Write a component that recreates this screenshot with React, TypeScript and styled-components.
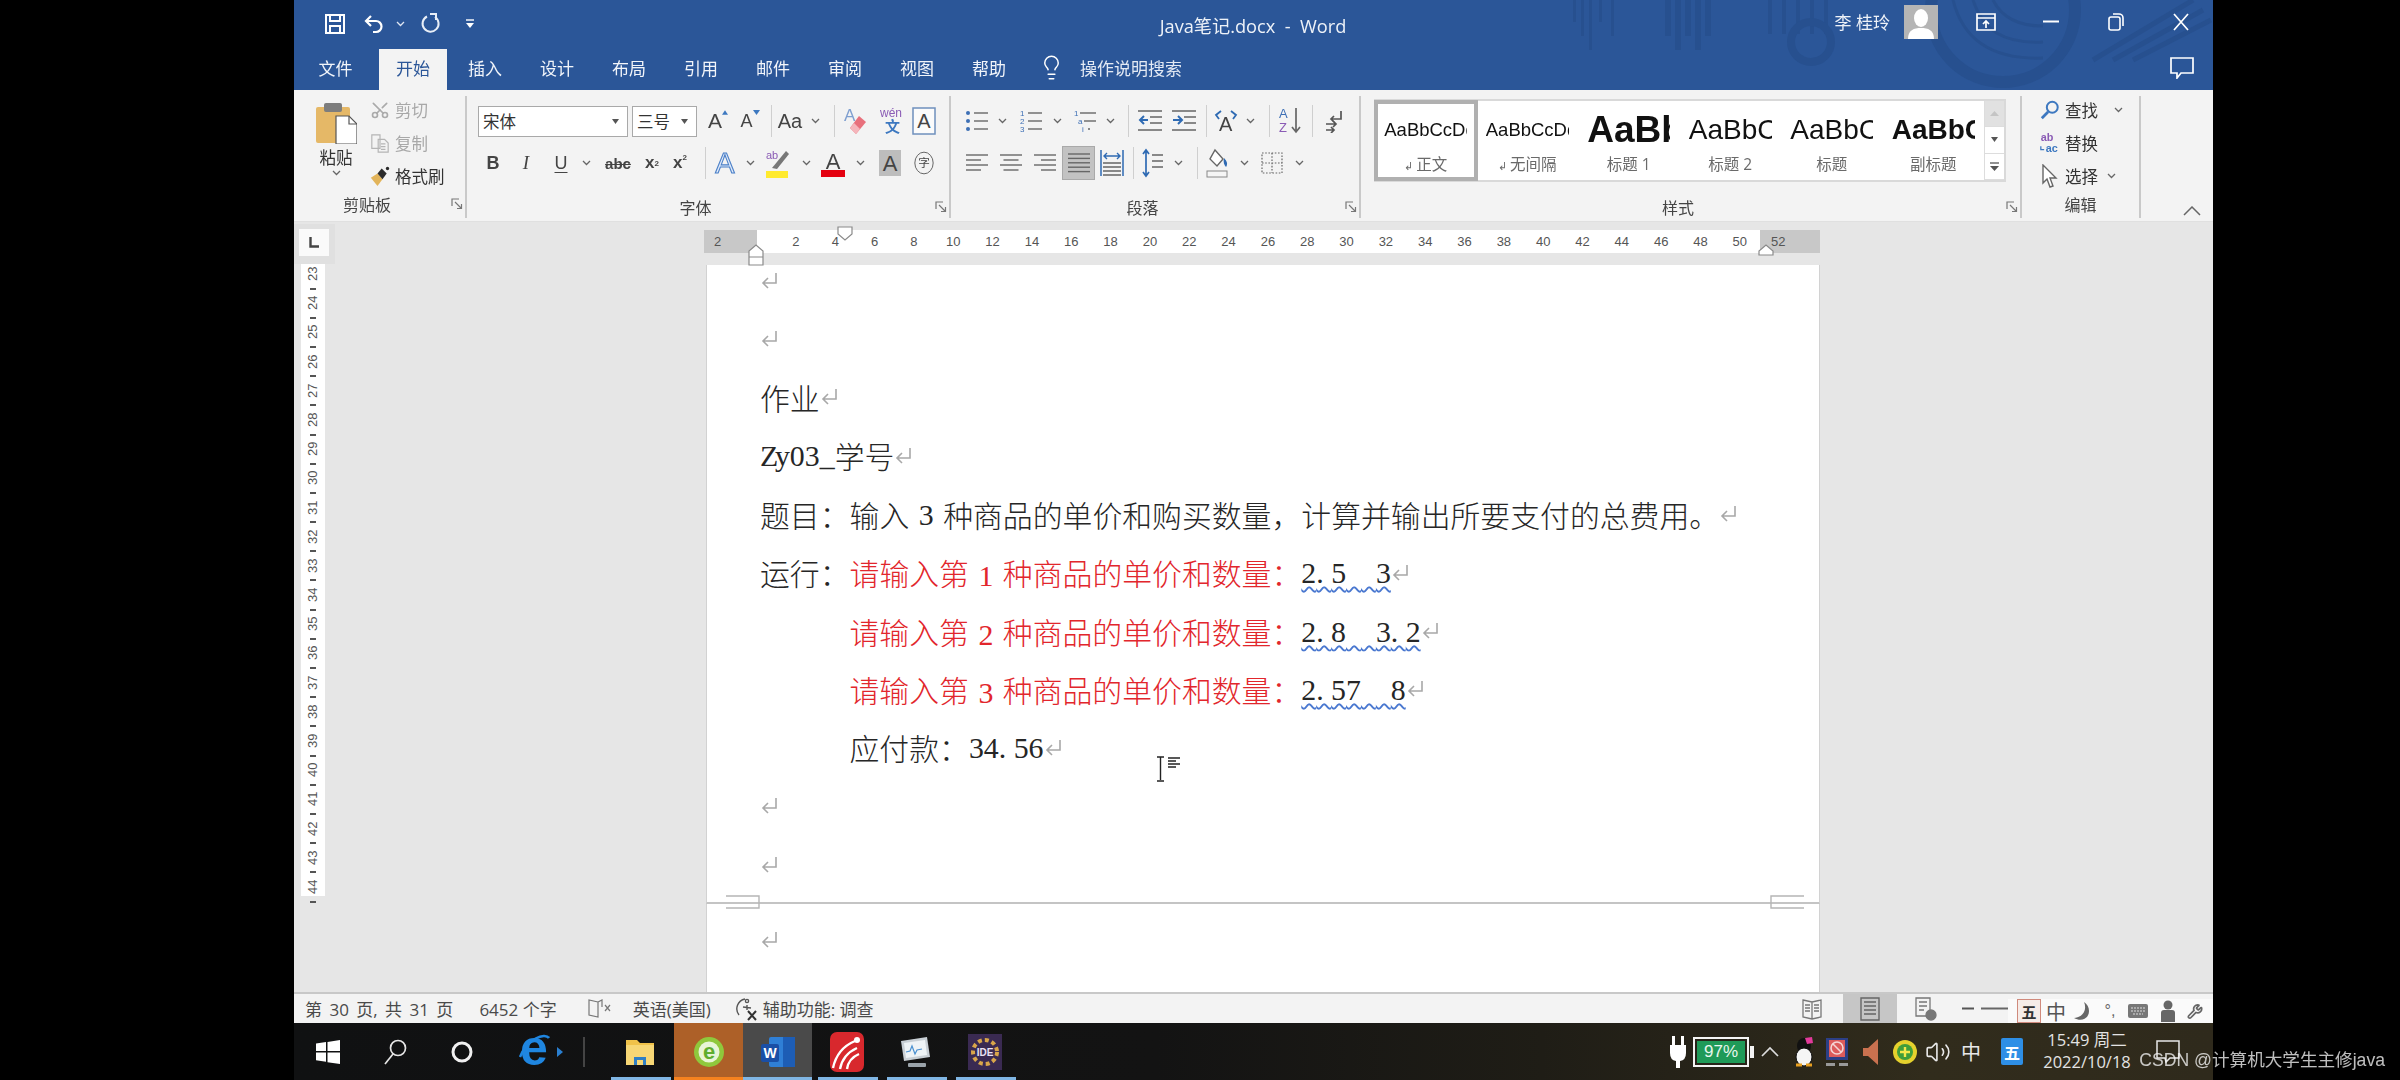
import React from "react";
import styled, { createGlobalStyle } from "styled-components";
import { Scissors, Lightbulb, Volume2, Wrench } from "lucide-react";

const UI = `"Open Sans","Noto Sans CJK SC",sans-serif`;

const Global = createGlobalStyle`
  html, body { margin: 0; padding: 0; background: #000; }
  * { box-sizing: border-box; }
  body { font-family: ${UI}; }
`;

const Screen = styled.div`
  position: relative; width: 2400px; height: 1080px; background: #000; overflow: hidden;
  display: flex; padding-left: 294px;
`;
const Win = styled.div`
  width: 1919px; height: 1080px; display: flex; flex-direction: column; filter: blur(0.45px);
`;
const Top = styled.div`
  position: relative; height: 90px; background: #2b5698; color: #fff; flex: none;
`;
const Pattern = styled.svg`
  position: absolute; right: 0; top: 0; width: 660px; height: 90px;
`;
const TitleRow = styled.div`
  position: relative; height: 49px; display: flex; align-items: center;
`;
const Qat = styled.div`
  display: flex; align-items: center; padding: 0 0 2px 30px; width: 860px;
`;
const Cell = styled.div<{ $w: number; $c?: string; $fs?: number; $b?: boolean; $i?: boolean; $serif?: boolean; $pl?: number }>`
  width: ${p => p.$w}px; flex: none; display: flex; align-items: center; justify-content: center;
  padding-left: ${p => p.$pl || 0}px;
  color: ${p => p.$c || "#444"}; font-size: ${p => p.$fs || 16}px;
  font-family: ${p => (p.$serif ? `"Liberation Serif",serif` : `"Liberation Sans","Noto Sans CJK SC",sans-serif`)};
  font-weight: ${p => (p.$b ? 700 : 400)}; font-style: ${p => (p.$i ? "italic" : "normal")};
  height: 32px; position: relative;
`;
const Title = styled.div`
  width: 198px; font-size: 18.2px; white-space: pre; color: #eef2f8; text-align: center;
`;
const User = styled.div`
  margin-left: auto; display: flex; align-items: center; color: #eef2f8; font-size: 17px; padding-bottom: 6px;
`;
const UserName = styled.span`
  margin-right: 14px; white-space: pre;
`;
const Avatar = styled.div`
  width: 34px; height: 34px; background: #b5b5b5; margin-right: 32px; display: flex; align-items: flex-end; justify-content: center;
`;
const TabRow = styled.div`
  position: relative; height: 41px; display: flex; align-items: stretch;
`;
const Tab = styled.div<{ $active?: boolean; $first?: boolean }>`
  width: ${p => (p.$first ? 83 : 68)}px; margin: 0 ${p => (p.$first ? 0 : 2)}px; flex: none; display: flex; align-items: center; justify-content: center;
  font-size: 17px; padding-bottom: 5px; color: ${p => (p.$active ? "#2b5698" : "#f2f5fa")};
  background: ${p => (p.$active ? "#f3f3f3" : "transparent")};
`;
const TellMe = styled.div`
  display: flex; align-items: center; gap: 15px; margin-left: 13px; padding-bottom: 5px; color: #e4eaf4; font-size: 17px; white-space: nowrap;
`;
const CommentBtn = styled.div`
  margin-left: auto; width: 43px; display: flex; align-items: center; justify-content: flex-start; padding-bottom: 4px;
`;
const Ribbon = styled.div`
  height: 132px; flex: none; background: #f3f3f3; border-bottom: 1px solid #e0e0e0; display: flex; align-items: flex-start; padding-top: 6px; position: relative;
`;
const Group = styled.div<{ $w: number }>`
  width: ${p => p.$w}px; height: 122px; flex: none; border-right: 2px solid #c9c9c9; display: flex; flex-direction: column; position: relative;
`;
const Body = styled.div`
  flex: 1; min-height: 0; display: flex; flex-direction: column; gap: 10px; padding: 9px 0 0 0;
`;
const Row = styled.div<{ $pl?: number }>`
  display: flex; align-items: center; height: 32px; padding-left: ${p => p.$pl || 0}px;
`;
const GLabel = styled.div`
  height: 22px; flex: none; display: flex; align-items: center; font-size: 16px; color: #444;
`;
const GLabelText = styled.div`
  flex: 1; text-align: center;
`;
const Launcher = styled.div`
  width: 25px; display: flex; justify-content: flex-end; padding-right: 2px;
`;
const Combo = styled.div<{ $w: number }>`
  width: ${p => p.$w}px; height: 31px; background: #fff; border: 1.5px solid #a9a9a9; display: flex; align-items: center; justify-content: space-between;
  padding: 0 7px 0 4px; font-size: 16.5px; color: #333; flex: none; margin-right: 4px;
`;
const VSep = styled.div<{ $ml?: number }>`
  width: 1px; height: 32px; background: #cfcfcf; margin-left: ${p => p.$ml || 0}px; flex: none;
`;
const Clip = styled.div`
  display: flex; height: 100px; margin-top: -3px;
`;
const PasteCol = styled.div`
  width: 68px; margin-left: 8px; display: flex; flex-direction: column; align-items: center; flex: none; padding-top: 9px; color: #333; font-size: 16.5px;
`;
const PasteText = styled.span`
  margin-top: 2px; line-height: 24px;
`;
const SmallCol = styled.div`
  display: flex; flex-direction: column; flex: none;
`;
const SmallRow = styled.div<{ $dim?: boolean }>`
  height: 33px; display: flex; align-items: center; gap: 5px; font-size: 16.5px; color: ${p => (p.$dim ? "#a8a8a8" : "#333")};
`;
const IconBox = styled.div`
  width: 20px; display: flex; justify-content: center; align-items: center; flex: none;
`;
const Gallery = styled.div`
  margin: 3px 0 0 13px; width: 632px; height: 83px; background: #fff; border: 2px solid #d9d9d9; border-left-width: 1px; display: flex; flex: none;
`;
const Styles = styled.div`
  flex: 1; display: flex; min-width: 0;
`;
const StyleItem = styled.div<{ $sel?: boolean }>`
  width: 101.5px; flex: none; display: flex; flex-direction: column; align-items: center; overflow: hidden;
  outline: ${p => (p.$sel ? "4px solid #b0b0b0" : "none")}; outline-offset: -3px;
`;
const Sample = styled.div<{ $fs: number; $b?: boolean }>`
  width: 83px; height: 51px; overflow: hidden; white-space: nowrap; display: flex; align-items: center;
  font-family: "Liberation Sans",sans-serif; font-size: ${p => p.$fs}px; font-weight: ${p => (p.$b ? 700 : 400)}; color: #111; padding-top: 6px;
`;
const StyleName = styled.div`
  font-size: 15.5px; color: #6a6a6a; line-height: 24px; white-space: pre;
`;
const StyleMark = styled.span`
  font-size: 11px; margin-right: 3px;
`;
const ScrollCol = styled.div`
  width: 20px; flex: none; display: flex; flex-direction: column; border-left: 1px solid #ddd;
`;
const ScrollBtn = styled.div<{ $gray?: boolean }>`
  flex: 1; display: flex; align-items: center; justify-content: center; background: ${p => (p.$gray ? "#e1e1e1" : "#fff")}; border-bottom: 1px solid #ddd;
`;
const EditCol = styled.div`
  display: flex; flex-direction: column; padding: 0 0 0 18px; height: 100px; margin-top: -3px;
`;
const Collapse = styled.div`
  flex: 1; height: 126px; display: flex; align-items: flex-end; justify-content: flex-end; padding: 0 12px 6px 0;
`;
const Doc = styled.div`
  flex: 1; min-height: 0; background: #e6e6e6; display: flex; align-items: flex-start; overflow: hidden;
`;
const LeftCol = styled.div`
  width: 410px; flex: none; display: flex; flex-direction: column;
`;
const CornerBand = styled.div`
  width: 41px; height: 40px; background: #e0e0e0; padding: 5px 0 0 5px; margin-top: 2px;
`;
const Corner = styled.div`
  width: 30px; height: 27px; background: #fafafa; display: flex; align-items: center; justify-content: center;
`;
const VRuler = styled.div`
  width: 24px; margin: 0 0 0 7px; height: 632px; background: #fff; display: flex; flex-direction: column; align-items: center; flex: none;
`;
const VNum = styled.div`
  height: 20px; font-size: 13px; color: #555; font-family: "Liberation Sans",sans-serif; writing-mode: vertical-rl; transform: rotate(180deg); line-height: 24px; text-align: center; flex: none;
`;
const VTick = styled.div`
  height: 9.2px; display: flex; align-items: center; flex: none;
`;
const VDash = styled.div`
  width: 6px; height: 2px; background: #555;
`;
const PageCol = styled.div`
  width: 1116px; flex: none; display: flex; flex-direction: column; position: relative;
`;
const RulerBand = styled.div`
  height: 43px; padding-top: 8px; position: relative; flex: none;
`;
const HRuler = styled.div`
  height: 23px; display: flex; font-family: "Liberation Sans",sans-serif; font-size: 13px; color: #555;
`;
const RulerGray = styled.div<{ $w: number; $pl: number }>`
  width: ${p => p.$w}px; background: #c8c8c8; padding-left: ${p => p.$pl}px; line-height: 23px; flex: none;
`;
const RulerWhite = styled.div`
  width: 1003px; flex: none; background: #fff; padding-left: 19.3px; display: flex;
`;
const RulerNum = styled.div`
  width: 39.33px; text-align: center; line-height: 23px; flex: none;
`;
const Marker = styled.svg<{ $l: number; $t: number }>`
  position: absolute; left: ${p => p.$l}px; top: ${p => p.$t}px;
`;
const Sheet = styled.div<{ $h: number; $rule?: boolean; $pt?: number }>`
  margin-left: 2px; width: 1114px; height: ${p => p.$h}px; background: #fff; padding: ${p => p.$pt || 0}px 0 0 53px; overflow: hidden; flex: none;
  border-left: 1px solid #d2d2d2; border-right: 1px solid #d2d2d2;
  border-bottom: ${p => (p.$rule ? "2px solid #c4c4c4" : "none")};
`;
const Lines = styled.div<{ $mt: number }>`
  margin-top: ${p => p.$mt}px; display: flex; flex-direction: column;
`;
const Line = styled.div<{ $indent?: boolean }>`
  height: 58.4px; display: flex; align-items: center; flex: none; white-space: pre;
  padding-left: ${p => (p.$indent ? 89.5 : 0)}px;
  font-family: "Noto Sans CJK SC",sans-serif; font-weight: 300; font-size: 29.85px; color: #262626;
`;
const Red = styled.span`
  color: #e2262c;
`;
const Lat = styled.span<{ $wavy?: boolean; $gap?: boolean }>`
  font-family: "Liberation Serif",serif; font-size: 29.85px; font-weight: 400; white-space: pre;
  margin: 0 ${p => (p.$gap ? 9.5 : 0)}px; position: relative; top: 1px;
  text-decoration: ${p => (p.$wavy ? "underline wavy #4a78d0 1.5px" : "none")}; text-underline-offset: 3px;
`;
const Dot = styled.span`
  letter-spacing: 7.46px;
`;
const WideZ = styled.span`
  letter-spacing: -3.3px;
`;
const Ret = styled.svg`
  flex: none; margin-left: 1px;
`;
const CropMark = styled.svg<{ $l: number; $t: number }>`
  position: absolute; left: ${p => p.$l}px; top: ${p => p.$t}px;
`;
const Status = styled.div`
  height: 31px; flex: none; background: #f3f3f3; border-top: 2px solid #c8c8c8; display: flex; align-items: center; padding-left: 11px; font-size: 17px; color: #4a4a4a; white-space: nowrap;
`;
const StatusItem = styled.div<{ $ml?: number; $ws?: number }>`
  margin-left: ${p => p.$ml || 0}px; display: flex; align-items: center; flex: none; word-spacing: ${p => p.$ws || 0}px; white-space: pre;
`;
const StatusRight = styled.div`
  margin-left: auto; display: flex; align-items: center; height: 100%;
`;
const ViewBtn = styled.div<{ $w: number; $active?: boolean }>`
  width: ${p => p.$w}px; height: 100%; display: flex; align-items: center; justify-content: center; background: ${p => (p.$active ? "#c6c6c6" : "transparent")};
`;
const Ime = styled.div`
  width: 205px; height: 24px; align-self: flex-end; background: #fafafa; display: flex; align-items: center; padding-left: 9px; color: #555;
`;
const Taskbar = styled.div`
  height: 57px; flex: none; display: flex; align-items: stretch; color: #fff; background: linear-gradient(90deg,#101112 0%,#131313 45%,#1f1d16 65%,#312c1c 85%,#2f2a1c 100%);
`;
const TCell = styled.div<{ $w: number }>`
  width: ${p => p.$w}px; flex: none; display: flex; align-items: center; justify-content: center;
`;
const TSep = styled.div`
  width: 2px; height: 30px; background: #444; align-self: center; margin: 0 20px 0 9px; flex: none;
`;
const Tile = styled.div<{ $bg?: string; $line?: string }>`
  width: 69px; flex: none; display: flex; align-items: center; justify-content: center; position: relative;
  background: ${p => p.$bg || "transparent"}; background-clip: border-box;
  &::after { content: ""; position: absolute; left: ${p => (p.$bg ? 0 : 6)}px; right: ${p => (p.$bg ? 0 : 3)}px; bottom: 0; height: 3px; background: ${p => p.$line || "#80b6e4"}; }
`;
const Tray = styled.div`
  margin-left: auto; display: flex; align-items: stretch; padding-right: 15px;
`;
const Battery = styled.div`
  width: 56px; height: 30px; border: 2.5px solid #f4f4f4; padding: 2px; display: flex; position: relative;
  &::after { content: ""; position: absolute; right: -7px; top: 7px; width: 4px; height: 12px; background: #f4f4f4; }
`;
const BatteryFill = styled.div`
  flex: 1; background: #1f9a58; color: #e8f6ee; font-size: 17px; display: flex; align-items: center; justify-content: center; font-family: "Liberation Sans",sans-serif;
`;
const Clock = styled.div`
  width: 102px; flex: none; display: flex; flex-direction: column; align-items: center; justify-content: center; font-size: 16.5px; line-height: 22px; color: #e3e3e3; white-space: nowrap; padding-bottom: 2px;
`;
const Cursor = styled.svg`
  position: absolute; left: 451px; top: 534px;
`;
const Watermark = styled.div`
  position: absolute; right: 15px; top: 1047px; font-size: 17.6px; line-height: 26px; color: rgba(245,245,245,.78); white-space: nowrap; font-family: "Liberation Sans","Noto Sans CJK SC",sans-serif;
`;

/* half-width run: digits keep their 0.5em, a dot is padded to 0.5em, a space counts as two quarter-em spaces */
const Half = ({ t }: { t: string }) => (
  <>
    {t.split("").map((ch, i) => {
      if (ch === ".") return <Dot key={i}>.</Dot>;
      if (ch === " ") return <React.Fragment key={i}>{"  "}</React.Fragment>;
      if (ch === "Z") return <WideZ key={i}>Z</WideZ>;
      return <React.Fragment key={i}>{ch}</React.Fragment>;
    })}
  </>
);

/* icons */
type SP = { c?: string };
const Chev = ({ c = "#666" }: SP) => (
  <svg width="9" height="6" viewBox="0 0 9 6"><path d="M1 1l3.5 3.5L8 1" fill="none" stroke={c} strokeWidth="1.3" /></svg>
);
const Down = ({ c = "#555" }: SP) => (
  <svg width="9" height="5" viewBox="0 0 9 5"><path d="M1 0h7L4.5 5z" fill={c} /></svg>
);
const Launch = () => (
  <svg width="12" height="12" viewBox="0 0 12 12" fill="none" stroke="#777" strokeWidth="1.2"><path d="M1 8V1h7" /><path d="M4 4l6 6M6 10.5h4.5V6" /></svg>
);
const ListIcon = ({ kind }: { kind: "bullet" | "num" | "multi" }) => (
  <svg width="26" height="26" viewBox="0 0 26 26">
    {[5, 13, 21].map((y, i) => (
      <g key={y}>
        {kind === "bullet" && <circle cx="4" cy={y} r="2" fill="#3d6fb5" />}
        {kind !== "bullet" && <text x={kind === "multi" ? 2 + i * 4 : 2} y={y + 3} fontSize="8" fill="#3d6fb5" fontFamily="Liberation Sans">{kind === "multi" ? "1ai"[i] : i + 1}</text>}
        <path d={`M${kind === "multi" ? 8 + i * 4 : 10} ${y}H${kind === "multi" && i === 2 ? 18 : 24}`} stroke="#666" strokeWidth="1.4" />
      </g>
    ))}
  </svg>
);
const IndentIcon = ({ inc }: { inc?: boolean }) => (
  <svg width="26" height="24" viewBox="0 0 26 24">
    <path d="M1 2h24M13 8h12M13 14h12M1 21h24" stroke="#666" strokeWidth="1.4" />
    <path d={inc ? "M2 11h8M7 7l4 4-4 4" : "M11 11H3M7 7l-4 4 4 4"} stroke="#2e6ab3" strokeWidth="2" fill="none" />
  </svg>
);
const AlignIcon = ({ mode }: { mode: "l" | "c" | "r" | "j" }) => {
  const rows = [22, 15, 22, 15];
  return (
    <svg width="24" height="22" viewBox="0 0 24 22">
      {(mode === "j" ? [22, 22, 22, 22, 22] : rows).map((w, i) => {
        const x = mode === "c" ? (24 - w) / 2 : mode === "r" ? 23 - w : 1;
        const y = mode === "j" ? 2 + i * 4.4 : 3 + i * 5;
        return <path key={i} d={`M${x} ${y}h${w}`} stroke="#666" strokeWidth="1.4" />;
      })}
    </svg>
  );
};
const DistIcon = () => (
  <svg width="26" height="28" viewBox="0 0 26 28" fill="none">
    <path d="M2 1v26M24 1v26" stroke="#2e6ab3" strokeWidth="1.5" />
    <path d="M5 7h16M8 4L5 7l3 3M18 4l3 3-3 3" stroke="#2e6ab3" strokeWidth="1.4" />
    <path d="M4 14h18M4 18h18M4 22h18M4 26h18" stroke="#666" strokeWidth="1.4" />
  </svg>
);
const SpacingIcon = () => (
  <svg width="22" height="30" viewBox="0 0 22 30" fill="none">
    <path d="M4 2v26M1 6l3-4 3 4M1 24l3 4 3-4" stroke="#2e6ab3" strokeWidth="1.7" />
    <path d="M10 7h11M10 13h11M10 19h11" stroke="#666" strokeWidth="1.4" />
  </svg>
);
const ShadeIcon = () => (
  <svg width="24" height="30" viewBox="0 0 24 30" fill="none">
    <path d="M9 2l8 9-6 7-7-7z" stroke="#666" strokeWidth="1.4" fill="#fff" />
    <path d="M18 10c3 3 4 6 2 9-2-2-3-5-2-9z" fill="#2e6ab3" />
    <rect x="1" y="23" width="20" height="6" stroke="#888" fill="#f5f5f5" />
  </svg>
);
const BorderIcon = () => (
  <svg width="22" height="24" viewBox="0 0 22 24" fill="none" stroke="#666" strokeWidth="1.2" strokeDasharray="1.6 1.6">
    <rect x="1" y="2" width="20" height="20" /><path d="M11 2v20M1 12h20" />
  </svg>
);
const SortIcon = () => (
  <svg width="26" height="30" viewBox="0 0 26 30" fill="none">
    <text x="1" y="12" fontSize="13" fill="#3d6fb5" fontFamily="Liberation Sans">A</text>
    <text x="1" y="26" fontSize="13" fill="#8a5bb5" fontFamily="Liberation Sans">Z</text>
    <path d="M18 2v24M14 21l4 5 4-5" stroke="#666" strokeWidth="1.7" />
  </svg>
);
const PilcrowIcon = () => (
  <svg width="20" height="24" viewBox="0 0 20 24" fill="none" stroke="#555" strokeWidth="1.7">
    <path d="M17 2v8H7M10 7l-3 3 3 3" /><path d="M2 15h10M9 12l3 3-3 3M2 21h8M7 18l3 3-3 3" />
  </svg>
);
const AArrows = () => (
  <svg width="26" height="24" viewBox="0 0 26 24">
    <text x="6" y="22" fontSize="20" fill="#444" fontFamily="Liberation Sans">A</text>
    <path d="M8 2L3 6l3 4M18 2l5 4-3 4" stroke="#2e6ab3" strokeWidth="1.8" fill="none" />
  </svg>
);
const Eraser = () => (
  <svg width="24" height="30" viewBox="0 0 24 30">
    <text x="0" y="15" fontSize="17" fill="#7f9fd0" fontFamily="Liberation Sans">A</text>
    <path d="M15 10l7 6-10 12-6-6z" fill="#e8707c" /><path d="M6 22l6 6 4-5-6-6z" fill="#f5b5bb" />
  </svg>
);
const Paste = () => (
  <svg width="42" height="42" viewBox="0 0 42 42">
    <rect x="1" y="5" width="34" height="36" rx="2" fill="#e5b867" />
    <rect x="9" y="1" width="18" height="9" rx="2" fill="#7d7d7d" />
    <path d="M21 14h13l8 8v20H21z" fill="#fff" stroke="#555" strokeWidth="1.2" />
    <path d="M34 14v8h8" fill="none" stroke="#555" strokeWidth="1.2" />
  </svg>
);
const CopyI = () => (
  <svg width="22" height="22" viewBox="0 0 22 22" fill="none" stroke="#b5b5b5" strokeWidth="1.3">
    <path d="M2 2h9l0 15H2zM9 7h7l4 4v10H9z" fill="#f3f3f3" /><path d="M12 12h5M12 15h5M12 18h5" />
  </svg>
);
const Brush = () => (
  <svg width="24" height="24" viewBox="0 0 24 24">
    <path d="M1 14l8-5 6 7-6 8z" fill="#e2b45a" />
    <path d="M9 9l5-6 6 6-5 7z" fill="#2b2b2b" />
    <circle cx="21" cy="3" r="2" fill="#2b2b2b" />
  </svg>
);
const Find = () => (
  <svg width="22" height="22" viewBox="0 0 22 22" fill="none">
    <circle cx="13.5" cy="8" r="6" stroke="#3d78c0" strokeWidth="2.2" />
    <path d="M9 13l-7 7" stroke="#3d78c0" strokeWidth="3" />
  </svg>
);
const Replace = () => (
  <svg width="24" height="26" viewBox="0 0 24 26">
    <text x="1" y="11" fontSize="13" fill="#8a5bb5" fontFamily="Liberation Sans" fontWeight="700">ab</text>
    <text x="7" y="24" fontSize="13" fill="#3d78c0" fontFamily="Liberation Sans" fontWeight="700">ac</text>
    <path d="M1 17v4h4" stroke="#3d78c0" strokeWidth="1.5" fill="none" />
  </svg>
);
const Arrow = () => (
  <svg width="18" height="24" viewBox="0 0 18 24"><path d="M2 1l0 18 4-4 3 8 3-1-3-8h6z" fill="#fff" stroke="#666" strokeWidth="1.4" /></svg>
);
const RetMark = ({ s = 1 }: { s?: number }) => (
  <Ret width={17 * s} height={17 * s} viewBox="0 0 17 17" fill="none" stroke="#a8a8a8" strokeWidth="1.6">
    <path d="M15 1v10H2M7 6l-5 5 5 5" />
  </Ret>
);
const StatusBook = () => (
  <svg width="24" height="20" viewBox="0 0 24 20" fill="none" stroke="#777" strokeWidth="1.2">
    <path d="M11 3L2 1v15l9 2zM11 3l4-2v7M18 6l5 6M23 6l-5 6" />
  </svg>
);
const Access = () => (
  <svg width="24" height="24" viewBox="0 0 24 24" fill="none" stroke="#555" strokeWidth="1.4">
    <path d="M10 2a10 10 0 0 0-6 16" /><circle cx="12" cy="4" r="1.6" /><path d="M12 8v5M8 10l8 1" />
    <path d="M13 14l8 9M21 14l-8 9" strokeWidth="2" stroke="#333" />
  </svg>
);

const nums: number[] = [];
for (let i = 23; i <= 44; i++) nums.push(i);
const hNums: number[] = [];
for (let i = 2; i <= 50; i += 2) hNums.push(i);

export default function App() {
  return (
    <Screen>
      <Global />
      <Win>
        <Top>
          <Pattern viewBox="0 0 660 90">
            <g fill="#27508f">
              {[0, 8, 16, 26, 38].map((x, i) => <rect key={x} x={20 + x} y="0" width="3" height={22 + (i % 3) * 14} />)}
              {[0, 10, 20, 30, 40].map((x, i) => <rect key={x} x={112 + x} y="0" width="6" height={36 + (i % 2) * 14} />)}
              {[0, 14, 28, 42, 56].map(x => <rect key={x} x={215 + x} y="0" width="4" height="34" />)}
            </g>
            <g fill="none" stroke="#27508f">
              <circle cx="258" cy="42" r="20" strokeWidth="8" />
              <circle cx="450" cy="10" r="72" strokeWidth="12" />
              <path d="M400 0c10 40 40 60 90 58M420 0c10 30 30 44 70 42M440 0c8 16 24 26 50 26" strokeWidth="3" />
              <path d="M540 60L640 0M560 60L650 10M580 60L658 20" strokeWidth="5" />
            </g>
          </Pattern>
          <TitleRow>
            <Qat>
              <Cell $w={22}><svg width="20" height="20" viewBox="0 0 20 20" fill="none" stroke="#fff" strokeWidth="2"><path d="M1 1h18v18H1zM5 1v6h10V1M5 19v-7h10v7" /></svg></Cell>
              <Cell $w={48} $pl={10}><svg width="22" height="20" viewBox="0 0 22 20" fill="none" stroke="#fff" strokeWidth="2.2"><path d="M7 2L2 7l5 5M2 7h10a5.5 5.5 0 0 1 0 11H9" /></svg></Cell>
              <Cell $w={12}><Chev c="#dfe6f2" /></Cell>
              <Cell $w={48}><svg width="22" height="22" viewBox="0 0 22 22" fill="none" stroke="#e8eef7" strokeWidth="2"><path d="M8 3.5A8 8 0 1 0 16 4M11 1h6v6" /></svg></Cell>
              <Cell $w={32}><svg width="10" height="10" viewBox="0 0 10 10"><path d="M1 1h8" stroke="#fff" strokeWidth="1.4" /><path d="M1 4h8L5 9z" fill="#fff" /></svg></Cell>
            </Qat>
            <Title>Java笔记.docx  -  Word</Title>
            <User>
              <UserName>李 桂玲</UserName>
              <Avatar><svg width="28" height="30" viewBox="0 0 28 30"><ellipse cx="14" cy="9" rx="7" ry="9" fill="#fff" /><path d="M1 30c0-9 6-11 13-11s13 2 13 11z" fill="#fff" /></svg></Avatar>
              <Cell $w={32}><svg width="20" height="18" viewBox="0 0 20 18" fill="none" stroke="#fff" strokeWidth="1.7"><path d="M1 1h18v16H1zM1 5h18M10 15V8M7 11l3-3 3 3" /></svg></Cell>
              <Cell $w={65} style={{ marginLeft: 16 }}><svg width="16" height="3" viewBox="0 0 16 3"><path d="M0 1.5h16" stroke="#fff" strokeWidth="2" /></svg></Cell>
              <Cell $w={65}><svg width="16" height="18" viewBox="0 0 16 18" fill="none" stroke="#fff" strokeWidth="1.6"><rect x="1" y="4" width="11" height="13" rx="2" /><path d="M5 1h6a4 4 0 0 1 4 4v8" /></svg></Cell>
              <Cell $w={65}><svg width="16" height="18" viewBox="0 0 16 18" fill="none" stroke="#fff" strokeWidth="1.7"><path d="M1 1l14 16M15 1L1 17" /></svg></Cell>
            </User>
          </TitleRow>
          <TabRow>
            <Tab $first>文件</Tab>
            <Tab $active>开始</Tab>
            {["插入", "设计", "布局", "引用", "邮件", "审阅", "视图", "帮助"].map(t => <Tab key={t}>{t}</Tab>)}
            <TellMe><Lightbulb size={27} strokeWidth={1.3} color="#fff" />操作说明搜索</TellMe>
            <CommentBtn><svg width="24" height="22" viewBox="0 0 24 22" fill="none" stroke="#fff" strokeWidth="1.7"><path d="M1 1h22v15H11l-4 5v-5H1z" /></svg></CommentBtn>
          </TabRow>
        </Top>
        <Ribbon>
          <Group $w={173}>
            <Clip>
              <PasteCol>
                <Paste />
                <PasteText>粘贴</PasteText>
                <Chev />
              </PasteCol>
              <SmallCol>
                <SmallRow $dim><IconBox><Scissors size={20} color="#aaa" style={{ transform: "rotate(-90deg)" }} /></IconBox>剪切</SmallRow>
                <SmallRow $dim><IconBox><CopyI /></IconBox>复制</SmallRow>
                <SmallRow><IconBox><Brush /></IconBox>格式刷</SmallRow>
              </SmallCol>
            </Clip>
            <GLabel><GLabelText>剪贴板</GLabelText><Launcher><Launch /></Launcher></GLabel>
          </Group>
          <Group $w={484}>
            <Body>
              <Row $pl={11}>
                <Combo $w={150}>宋体<Down /></Combo>
                <Combo $w={65}>三号<Down /></Combo>
                <Cell $w={34}><Cell $w={20} $fs={21}>A<svg width="7" height="5" viewBox="0 0 7 5" style={{ marginTop: -18 }}><path d="M3.5 0L7 5H0z" fill="#3d78c0" /></svg></Cell></Cell>
                <Cell $w={30} $fs={18}>A<svg width="7" height="5" viewBox="0 0 7 5" style={{ marginTop: -18 }}><path d="M0 0h7L3.5 5z" fill="#3d78c0" /></svg></Cell>
                <VSep $ml={6} />
                <Cell $w={36} $fs={20}>Aa</Cell>
                <Cell $w={14}><Chev /></Cell>
                <VSep $ml={12} />
                <Cell $w={42}><Eraser /></Cell>
                <Cell $w={30}><svg width="26" height="30" viewBox="0 0 26 30"><text x="1" y="11" fontSize="12" fill="#8a5bb5" fontFamily="Liberation Sans">wén</text><text x="6" y="26" fontSize="15" fontWeight="700" fill="#3d78c0" fontFamily="Noto Sans CJK SC">文</text></svg></Cell>
                <Cell $w={34}><svg width="24" height="28" viewBox="0 0 24 28"><rect x="1" y="1" width="22" height="26" fill="#fbfbfb" stroke="#6f90bd" strokeWidth="1.5" /><text x="12" y="21" textAnchor="middle" fontSize="20" fill="#444" fontFamily="Liberation Sans">A</text></svg></Cell>
              </Row>
              <Row $pl={11}>
                <Cell $w={30} $b $fs={18}>B</Cell>
                <Cell $w={36} $i $fs={19} $serif>I</Cell>
                <Cell $w={34} $fs={18} style={{ textDecoration: "underline", textUnderlineOffset: 3 }}>U</Cell>
                <Cell $w={16}><Chev /></Cell>
                <Cell $w={48} $b $fs={15} style={{ textDecoration: "line-through" }}>abc</Cell>
                <Cell $w={20} $b $fs={17}>x<sub style={{ fontSize: 8 }}>2</sub></Cell>
                <Cell $w={36} $b $fs={17}>x<sup style={{ fontSize: 8, alignSelf: "flex-start", marginTop: 6 }}>2</sup></Cell>
                <VSep $ml={7} />
                <Cell $w={38}><svg width="24" height="28" viewBox="0 0 24 28"><text x="12" y="24" textAnchor="middle" fontSize="29" fill="#dfeafa" stroke="#4d81c8" strokeWidth="1.1" fontFamily="Liberation Sans">A</text></svg></Cell>
                <Cell $w={12}><Chev /></Cell>
                <Cell $w={44}><svg width="24" height="30" viewBox="0 0 24 30"><text x="0" y="11" fontSize="11" fill="#8a5bb5" fontFamily="Liberation Sans">ab</text><path d="M6 20L20 3l3 3-12 15z" fill="#777" /><rect y="23" width="22" height="7" fill="#ffea2e" /></svg></Cell>
                <Cell $w={12}><Chev /></Cell>
                <Cell $w={42}><svg width="24" height="28" viewBox="0 0 24 28"><text x="12" y="20" textAnchor="middle" fontSize="22" fill="#444" fontFamily="Liberation Sans">A</text><rect y="21" width="24" height="7" fill="#e4000f" /></svg></Cell>
                <Cell $w={12}><Chev /></Cell>
                <Cell $w={48}><svg width="22" height="26" viewBox="0 0 22 26"><rect width="22" height="26" fill="#bdbdbd" /><text x="11" y="21" textAnchor="middle" fontSize="22" fill="#444" fontFamily="Liberation Sans">A</text></svg></Cell>
                <Cell $w={20}><svg width="24" height="28" viewBox="0 0 24 28"><ellipse cx="12" cy="14" rx="11" ry="13" fill="none" stroke="#666" strokeWidth="1.2" /><text x="12" y="19" textAnchor="middle" fontSize="14" fill="#444" fontFamily="Noto Sans CJK SC">字</text></svg></Cell>
              </Row>
            </Body>
            <GLabel><GLabelText>字体</GLabelText><Launcher><Launch /></Launcher></GLabel>
          </Group>
          <Group $w={410}>
            <Body>
              <Row $pl={13}>
                <Cell $w={26}><ListIcon kind="bullet" /></Cell>
                <Cell $w={24}><Chev /></Cell>
                <Cell $w={34}><ListIcon kind="num" /></Cell>
                <Cell $w={18}><Chev /></Cell>
                <Cell $w={38}><ListIcon kind="multi" /></Cell>
                <Cell $w={12}><Chev /></Cell>
                <VSep $ml={12} />
                <Cell $w={42}><IndentIcon /></Cell>
                <Cell $w={26}><IndentIcon inc /></Cell>
                <VSep $ml={9} />
                <Cell $w={37}><AArrows /></Cell>
                <Cell $w={12}><Chev /></Cell>
                <VSep $ml={13} />
                <Cell $w={42}><SortIcon /></Cell>
                <VSep />
                <Cell $w={42}><PilcrowIcon /></Cell>
              </Row>
              <Row $pl={13}>
                <Cell $w={26}><AlignIcon mode="l" /></Cell>
                <Cell $w={42}><AlignIcon mode="c" /></Cell>
                <Cell $w={26}><AlignIcon mode="r" /></Cell>
                <Cell $w={31} style={{ background: "#c2c2c2", outline: "1px solid #a9a9a9", marginLeft: 5 }}><AlignIcon mode="j" /></Cell>
                <Cell $w={36}><DistIcon /></Cell>
                <VSep $ml={3} />
                <Cell $w={38}><SpacingIcon /></Cell>
                <Cell $w={12}><Chev /></Cell>
                <VSep $ml={13} />
                <Cell $w={40}><ShadeIcon /></Cell>
                <Cell $w={12}><Chev /></Cell>
                <Cell $w={43}><BorderIcon /></Cell>
                <Cell $w={12}><Chev /></Cell>
              </Row>
            </Body>
            <GLabel><GLabelText>段落</GLabelText><Launcher><Launch /></Launcher></GLabel>
          </Group>
          <Group $w={661}>
            <Gallery>
              <Styles>
                <StyleItem $sel><Sample $fs={18.5}>AaBbCcDd</Sample><StyleName><StyleMark>↲</StyleMark>正文</StyleName></StyleItem>
                <StyleItem><Sample $fs={18.5}>AaBbCcDd</Sample><StyleName><StyleMark>↲</StyleMark>无间隔</StyleName></StyleItem>
                <StyleItem><Sample $fs={37} $b>AaBb</Sample><StyleName>标题 1</StyleName></StyleItem>
                <StyleItem><Sample $fs={28}>AaBbCc</Sample><StyleName>标题 2</StyleName></StyleItem>
                <StyleItem><Sample $fs={28}>AaBbCc</Sample><StyleName>标题</StyleName></StyleItem>
                <StyleItem><Sample $fs={28} $b>AaBbCc</Sample><StyleName>副标题</StyleName></StyleItem>
              </Styles>
              <ScrollCol>
                <ScrollBtn $gray><svg width="9" height="5" viewBox="0 0 9 5"><path d="M0 5h9L4.5 0z" fill="#c4c4c4" /></svg></ScrollBtn>
                <ScrollBtn><Down /></ScrollBtn>
                <ScrollBtn><svg width="9" height="9" viewBox="0 0 9 9"><path d="M0 1h9" stroke="#555" strokeWidth="1.3" /><path d="M0 4h9L4.5 9z" fill="#555" /></svg></ScrollBtn>
              </ScrollCol>
            </Gallery>
            <div style={{ flex: 1 }} />
            <GLabel><GLabelText>样式</GLabelText><Launcher><Launch /></Launcher></GLabel>
          </Group>
          <Group $w={119}>
            <EditCol>
              <SmallRow><IconBox><Find /></IconBox>查找<Cell $w={30}><Chev /></Cell></SmallRow>
              <SmallRow><IconBox><Replace /></IconBox>替换</SmallRow>
              <SmallRow><IconBox><Arrow /></IconBox>选择<Cell $w={16}><Chev /></Cell></SmallRow>
            </EditCol>
            <GLabel><GLabelText>编辑</GLabelText></GLabel>
          </Group>
          <Collapse><svg width="18" height="10" viewBox="0 0 18 10" fill="none" stroke="#666" strokeWidth="1.5"><path d="M1 9l8-8 8 8" /></svg></Collapse>
        </Ribbon>
        <Doc>
          <LeftCol>
            <CornerBand><Corner><svg width="10" height="11" viewBox="0 0 10 11"><path d="M1.5 0v9.5H10" fill="none" stroke="#444" strokeWidth="2.4" /></svg></Corner></CornerBand>
            <VRuler>
              {nums.map(n => (
                <React.Fragment key={n}>
                  <VNum>{n}</VNum>
                  <VTick><VDash /></VTick>
                </React.Fragment>
              ))}
            </VRuler>
          </LeftCol>
          <PageCol>
            <RulerBand>
              <HRuler>
                <RulerGray $w={53} $pl={10}>2</RulerGray>
                <RulerWhite>{hNums.map(n => <RulerNum key={n}>{n}</RulerNum>)}</RulerWhite>
                <RulerGray $w={60} $pl={11}>52</RulerGray>
              </HRuler>
              <Marker $l={133} $t={4} width="16" height="15" viewBox="0 0 16 15"><path d="M1 1h14v7l-7 6-7-6z" fill="#fff" stroke="#8a8a8a" strokeWidth="1.2" /></Marker>
              <Marker $l={44} $t={22} width="16" height="22" viewBox="0 0 16 22"><path d="M1 13V7l7-6 7 6v6zM1 13h14v8H1z" fill="#fff" stroke="#8a8a8a" strokeWidth="1.2" /></Marker>
              <Marker $l={1054} $t={22} width="16" height="12" viewBox="0 0 16 12"><path d="M1 11V7l7-6 7 6v4z" fill="#fff" stroke="#8a8a8a" strokeWidth="1.2" /></Marker>
            </RulerBand>
            <Sheet $h={639} $rule>
              <Lines $mt={-14}>
                <Line><RetMark /></Line>
                <Line><RetMark /></Line>
                <Line>作业<RetMark /></Line>
                <Line><Lat><Half t="Zy03_" /></Lat>学号<RetMark /></Line>
                <Line>题目：输入<Lat $gap>3</Lat>种商品的单价和购买数量，计算并输出所要支付的总费用。<RetMark /></Line>
                <Line>运行：<Red>请输入第<Lat $gap>1</Lat>种商品的单价和数量：</Red><Lat $wavy><Half t="2.5  3" /></Lat><RetMark /></Line>
                <Line $indent><Red>请输入第<Lat $gap>2</Lat>种商品的单价和数量：</Red><Lat $wavy><Half t="2.8  3.2" /></Lat><RetMark /></Line>
                <Line $indent><Red>请输入第<Lat $gap>3</Lat>种商品的单价和数量：</Red><Lat $wavy><Half t="2.57  8" /></Lat><RetMark /></Line>
                <Line $indent>应付款：<Lat><Half t="34.56" /></Lat><RetMark /></Line>
                <Line><RetMark /></Line>
                <Line><RetMark /></Line>
              </Lines>
            </Sheet>
            <Sheet $h={88} $pt={6}>
              <Lines $mt={0}>
                <Line><RetMark /></Line>
              </Lines>
            </Sheet>
            <Cursor width="36" height="26" viewBox="0 0 36 26" fill="none" stroke="#222">
              <path d="M2 1h7M5.5 1v23M2 25h7" strokeWidth="1.4" />
              <path d="M13 2h12M13 5h8M13 8h12M13 11h8" strokeWidth="1.4" />
            </Cursor>
            <CropMark $l={22} $t={673} width="34" height="14" viewBox="0 0 34 14" fill="none" stroke="#b5b5b5" strokeWidth="1.4"><path d="M0 1h33v12H0" /></CropMark>
            <CropMark $l={1066} $t={673} width="34" height="14" viewBox="0 0 34 14" fill="none" stroke="#b5b5b5" strokeWidth="1.4"><path d="M34 1H1v12h33" /></CropMark>
          </PageCol>
        </Doc>
        <Status>
          <StatusItem $ws={3}>第 30 页, 共 31 页</StatusItem>
          <StatusItem $ml={26}>6452 个字</StatusItem>
          <StatusItem $ml={30}><StatusBook /></StatusItem>
          <StatusItem $ml={22}>英语(美国)</StatusItem>
          <StatusItem $ml={24}><Access /></StatusItem>
          <StatusItem $ml={4}>辅助功能: 调查</StatusItem>
          <StatusRight>
            <ViewBtn $w={62}><svg width="20" height="22" viewBox="0 0 20 22" fill="none" stroke="#777" strokeWidth="1.3"><path d="M1 2l9 2 9-2v17l-9 2-9-2zM10 4v17M3 7h5M3 10h5M3 13h5M12 7h5M12 10h5M12 13h5" /></svg></ViewBtn>
            <ViewBtn $w={54} $active><svg width="20" height="24" viewBox="0 0 20 24" fill="none" stroke="#666" strokeWidth="1.4"><path d="M1 1h18v22H1zM4 5h12M4 9h12M4 13h12M4 17h12" /></svg></ViewBtn>
            <ViewBtn $w={58}><svg width="22" height="24" viewBox="0 0 22 24" fill="none" stroke="#777" strokeWidth="1.3"><path d="M1 1h14v18H1zM4 5h8M4 9h8M4 13h5" /><circle cx="16" cy="18" r="5" fill="#777" /></svg></ViewBtn>
            <ViewBtn $w={26}><svg width="12" height="3" viewBox="0 0 12 3"><path d="M0 1.5h12" stroke="#555" strokeWidth="2" /></svg></ViewBtn>
            <ViewBtn $w={27}><svg width="27" height="3" viewBox="0 0 27 3"><path d="M0 1.5h27" stroke="#666" strokeWidth="2" /></svg></ViewBtn>
            <Ime>
              <Cell $w={24} $fs={15} $b $c="#333" style={{ height: 24, border: "1.5px solid #d08a7c", background: "#f6ece8" }}>五</Cell>
              <Cell $w={30} $fs={20} $c="#555">中</Cell>
              <Cell $w={22}><svg width="18" height="20" viewBox="0 0 18 20"><path d="M11 1c3 7 0 15-10 16 7 4 15 1 15-7 0-4-2-7-5-9z" fill="#666" /></svg></Cell>
              <Cell $w={34} $fs={16} $c="#666">°,</Cell>
              <Cell $w={22}><svg width="22" height="16" viewBox="0 0 22 16"><rect x="1" y="1" width="20" height="14" rx="2" fill="#777" /><path d="M4 5h14M4 8h14M6 11h10" stroke="#ddd" strokeWidth="1.2" strokeDasharray="2 1" /></svg></Cell>
              <Cell $w={38}><svg width="16" height="22" viewBox="0 0 16 22" fill="#666"><circle cx="8" cy="5" r="4.5" /><path d="M1 22V13q0-3 3-3h8q3 0 3 3v9z" /></svg></Cell>
              <Cell $w={16}><Wrench size={19} strokeWidth={2.6} color="#666" /></Cell>
            </Ime>
          </StatusRight>
        </Status>
        <Taskbar>
          <TCell $w={68}><svg width="24" height="24" viewBox="0 0 24 24" fill="#fff"><path d="M0 3.5l10-1.4V11H0zM11.5 2l12.5-2v11H11.5zM0 12.5h10v9.2L0 20.3zM11.5 12.5H24V24l-12.5-1.8z" /></svg></TCell>
          <TCell $w={66}><svg width="24" height="26" viewBox="0 0 24 26" fill="none" stroke="#e5e5e5" strokeWidth="1.7"><circle cx="15" cy="9" r="7.5" /><path d="M10 15L2 25" /></svg></TCell>
          <TCell $w={68}><svg width="24" height="24" viewBox="0 0 24 24" fill="none" stroke="#f0f0f0" strokeWidth="3"><circle cx="12" cy="12" r="9" /></svg></TCell>
          <TCell $w={78}><svg width="60" height="38" viewBox="0 0 60 38"><text x="15" y="32" fontSize="50" fontWeight="700" fill="#1f86e0" fontFamily="Liberation Sans">e</text><path d="M15 24C22 6 40-1 44 5" fill="none" stroke="#1f86e0" strokeWidth="2.5" /><path d="M52 14l6 5-6 5z" fill="#2a7fd0" /></svg></TCell>
          <TSep />
          <Tile><svg width="30" height="30" viewBox="0 0 30 30"><path d="M1 3h11l3 3h14v22H1z" fill="#f0c24a" /><rect x="1" y="8" width="28" height="20" fill="#f7d775" /><path d="M9 28v-8h12v8h-3v-5h-6v5z" fill="#2f7fc4" /></svg></Tile>
          <Tile $bg="#ad6028" $line="#f5821f"><svg width="32" height="34" viewBox="0 0 32 34"><circle cx="16" cy="17" r="15" fill="#8fc83c" /><circle cx="16" cy="17" r="10.5" fill="#e8f5d6" /><text x="16" y="24" textAnchor="middle" fontSize="22" fontWeight="700" fill="#5fae2e" fontFamily="Liberation Sans">e</text></svg></Tile>
          <Tile $bg="#4a4a4a"><svg width="34" height="34" viewBox="0 0 34 34"><rect x="8" y="2" width="26" height="30" rx="2" fill="#2f7fd6" /><rect x="22" y="2" width="12" height="30" fill="#1d5db5" /><rect x="0" y="9" width="18" height="18" rx="2" fill="#1a4fa6" /><text x="9" y="23" textAnchor="middle" fontSize="14" fontWeight="700" fill="#fff" fontFamily="Liberation Sans">W</text></svg></Tile>
          <Tile><svg width="34" height="40" viewBox="0 0 34 40"><rect width="34" height="40" rx="7" fill="#d8282d" /><path d="M3 36c3-14 10-22 22-27M10 37c2-10 8-17 17-21M17 37c1-7 5-12 12-15" fill="none" stroke="#fff" strokeWidth="2.4" /><circle cx="27" cy="8" r="3" fill="#fff" /></svg></Tile>
          <Tile><svg width="34" height="34" viewBox="0 0 34 34"><path d="M2 6l26-4 3 20-26 4z" fill="#c9d0d6" /><path d="M5 8l21-3 2 15-21 3z" fill="#eef3f6" /><path d="M7 17l4-1 2-5 3 8 2-4 5-1" fill="none" stroke="#4a90d0" strokeWidth="1.2" /><rect x="9" y="28" width="18" height="4" rx="1" fill="#9aa3aa" /></svg></Tile>
          <Tile><svg width="34" height="36" viewBox="0 0 34 36"><rect width="34" height="36" fill="#3a2a52" /><circle cx="17" cy="18" r="12" fill="none" stroke="#d9a64a" strokeWidth="4" strokeDasharray="4 3" /><text x="17" y="22" textAnchor="middle" fontSize="10" fontWeight="700" fill="#e9e2f3" fontFamily="Liberation Sans">IDE</text></svg></Tile>
          <Tray>
            <TCell $w={25}><svg width="18" height="34" viewBox="0 0 18 34" fill="#fff"><path d="M3 1h3v9H3zM12 1h3v9h-3zM1 10h16v8q0 7-6 8v7H7v-7q-6-1-6-8z" /></svg></TCell>
            <TCell $w={62}><Battery><BatteryFill>97%</BatteryFill></Battery></TCell>
            <TCell $w={36}><svg width="18" height="11" viewBox="0 0 18 11" fill="none" stroke="#ddd" strokeWidth="1.7"><path d="M1 10l8-8 8 8" /></svg></TCell>
            <TCell $w={32}><svg width="22" height="30" viewBox="0 0 22 30"><ellipse cx="11" cy="9" rx="7" ry="8" fill="#111" /><ellipse cx="11" cy="20" rx="8" ry="9" fill="#f5f5f5" stroke="#111" /><path d="M12 1l7-1 1 6-6 1z" fill="#e23a9b" /><path d="M3 28h6M13 28h6" stroke="#e8a020" strokeWidth="3" /></svg></TCell>
            <TCell $w={34}><svg width="24" height="30" viewBox="0 0 24 30"><rect x="1" y="1" width="22" height="22" fill="#2c3f86" /><rect x="4" y="3" width="16" height="17" fill="#dd5b5b" /><circle cx="12" cy="11" r="6" fill="none" stroke="#f5d5d5" strokeWidth="1.6" /><path d="M8 7l8 8" stroke="#f5d5d5" strokeWidth="1.6" /><path d="M1 26h9v3H1zM14 26h9v3h-9z" fill="#999" /></svg></TCell>
            <TCell $w={34}><svg width="18" height="28" viewBox="0 0 18 28"><path d="M16 1v26L6 18H1v-8h5z" fill="#c9714f" /></svg></TCell>
            <TCell $w={34}><svg width="26" height="26" viewBox="0 0 26 26"><circle cx="13" cy="13" r="12" fill="#e5d12d" /><circle cx="13" cy="13" r="8" fill="#3f9e3a" /><path d="M13 8v10M8 13h10" stroke="#f4e94a" strokeWidth="2.4" /></svg></TCell>
            <TCell $w={32}><Volume2 size={26} strokeWidth={1.5} color="#e8e8e8" /></TCell>
            <TCell $w={34}><Cell $w={24} $fs={20} $c="#e8e8e8">中</Cell></TCell>
            <TCell $w={48}><Cell $w={22} $fs={16} $b $c="#fff" style={{ height: 27, background: "#2e8fe6", borderRadius: 2 }}>五</Cell></TCell>
            <Clock><div>15:49 周二</div><div>2022/10/18</div></Clock>
            <TCell $w={60}><svg width="24" height="26" viewBox="0 0 24 26" fill="none" stroke="#e8e8e8" strokeWidth="1.5"><path d="M1 2h22v17h-9l-4 4-1-4H1z" /></svg></TCell>
          </Tray>
        </Taskbar>
      </Win>
      <Watermark>CSDN @计算机大学生主修java</Watermark>
    </Screen>
  );
}
